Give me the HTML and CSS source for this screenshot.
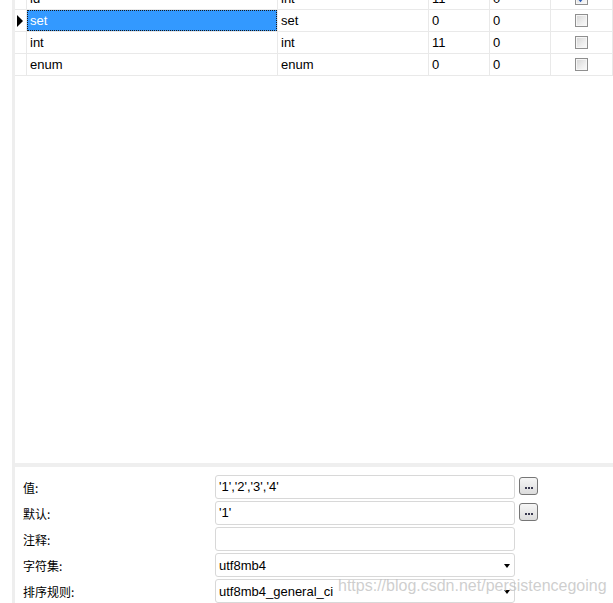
FILE: index.html
```html
<!DOCTYPE html>
<html>
<head>
<meta charset="utf-8">
<link rel="stylesheet" href="styles.css">
</head>
<body>
<div class="app">
  <div class="main">
    <div class="grid-area">
      <div class="grid">
        <div class="row">
          <div class="cell ind"></div>
          <div class="cell c1">id</div>
          <div class="cell c2">int</div>
          <div class="cell c3">11</div>
          <div class="cell c4">0</div>
          <div class="cell c5"><span class="chk checked"><svg width="9" height="9" viewBox="0 0 9 9"><path d="M1.5 4.5 L3.5 6.8 L7.5 1.8" fill="none" stroke="#2a5cb8" stroke-width="1.8"/></svg></span></div>
        </div>
        <div class="row">
          <div class="cell ind"><span class="arrow"></span></div>
          <div class="cell c1 sel"><span class="focus">set</span></div>
          <div class="cell c2">set</div>
          <div class="cell c3">0</div>
          <div class="cell c4">0</div>
          <div class="cell c5"><span class="chk"></span></div>
        </div>
        <div class="row">
          <div class="cell ind"></div>
          <div class="cell c1">int</div>
          <div class="cell c2">int</div>
          <div class="cell c3">11</div>
          <div class="cell c4">0</div>
          <div class="cell c5"><span class="chk"></span></div>
        </div>
        <div class="row">
          <div class="cell ind"></div>
          <div class="cell c1">enum</div>
          <div class="cell c2">enum</div>
          <div class="cell c3">0</div>
          <div class="cell c4">0</div>
          <div class="cell c5"><span class="chk"></span></div>
        </div>
      </div>
    </div>
    <div class="divider"></div>
    <div class="form">
      <div class="label">值:</div>
      <div class="field">'1','2','3','4'</div>
      <div class="btn"><span class="dots"><i></i><i></i><i></i></span></div>

      <div class="label">默认:</div>
      <div class="field">'1'</div>
      <div class="btn"><span class="dots"><i></i><i></i><i></i></span></div>

      <div class="label">注释:</div>
      <div class="field"></div>
      <div></div>

      <div class="label">字符集:</div>
      <div class="field select">utf8mb4<span class="caret"></span></div>
      <div></div>

      <div class="label">排序规则:</div>
      <div class="field select">utf8mb4_general_ci<span class="caret"></span></div>
      <div></div>
    </div>
  </div>
  <div class="watermark">https://blog.csdn.net/persistencegoing</div>
</div>
</body>
</html>
```
FILE: styles.css
```css
html, body {
  margin: 0;
  padding: 0;
  background: #ffffff;
}
body {
  font-family: "Liberation Sans", Arial, "Noto Sans CJK SC", sans-serif;
  font-size: 13px;
  color: #000;
  overflow: hidden;
}
.app {
  position: relative;
  width: 613px;
  height: 603px;
  overflow: hidden;
}
.main {
  margin-left: 12px;
  border-left: 3px solid #eeeeee;
  height: 603px;
  display: flex;
  flex-direction: column;
}
.grid-area {
  height: 463px;
  overflow: hidden;
  flex: none;
}
.grid {
  margin-top: -12px;
}
.row {
  display: flex;
  height: 22px;
  box-sizing: border-box;
  border-bottom: 1px solid #e9e9e9;
}
.cell {
  box-sizing: border-box;
  border-right: 1px solid #e9e9e9;
  height: 21px;
  line-height: 21px;
  padding-left: 3px;
  white-space: nowrap;
  overflow: hidden;
}
.ind { width: 12px; padding: 0; display: flex; align-items: center; padding-left: 2px; }
.c1 { width: 251px; }
.c2 { width: 151px; }
.c3 { width: 61px; }
.c4 { width: 61px; }
.c5 { width: 62px; display: flex; align-items: center; justify-content: center; padding: 0; }
.arrow {
  width: 0;
  height: 0;
  border-left: 6px solid #000;
  border-top: 6px solid transparent;
  border-bottom: 6px solid transparent;
}
.sel {
  background: #3399ff;
  color: #fff;
  padding: 0;
}
.focus {
  display: block;
  height: 21px;
  box-sizing: border-box;
  border: 1px dotted #1a1a1a;
  line-height: 19px;
  padding-left: 2px;
}
.chk {
  display: flex;
  align-items: center;
  justify-content: center;
  width: 13px;
  height: 13px;
  box-sizing: border-box;
  border: 1px solid #8f8f8f;
  background: linear-gradient(135deg, #d4d4d4 0%, #eeeeee 60%, #fbfbfb 100%);
  box-shadow: inset 0 0 0 1px #f6f6f6;
}
.chk svg { display: block; }
.divider {
  height: 4px;
  background: #efefef;
  flex: none;
}
.form {
  display: grid;
  grid-template-columns: 195px 300px 19px;
  column-gap: 5px;
  row-gap: 2px;
  grid-auto-rows: 24px;
  padding-top: 8px;
}
.label {
  font-family: "Noto Sans CJK SC", sans-serif;
  font-size: 12px;
  padding-left: 8px;
  display: flex;
  align-items: center;
}
.field {
  box-sizing: border-box;
  height: 24px;
  border: 1px solid #d8d8d8;
  border-radius: 3px;
  padding-left: 3px;
  line-height: 22px;
  font-family: "Liberation Sans", Arial, sans-serif;
  font-size: 13px;
  white-space: nowrap;
}
.select {
  display: flex;
  align-items: center;
  justify-content: space-between;
  padding-right: 4px;
  line-height: normal;
}
.caret {
  width: 0;
  height: 0;
  border-top: 4px solid #000;
  border-left: 3.5px solid transparent;
  border-right: 3.5px solid transparent;
  margin-top: 2px;
}
.btn {
  box-sizing: border-box;
  width: 19px;
  height: 18px;
  margin-top: 2px;
  margin-left: -1px;
  border: 1px solid #767676;
  border-radius: 3px;
  background: linear-gradient(#f6f6f6, #dcdcdc);
  display: flex;
  align-items: flex-end;
  justify-content: center;
  padding-bottom: 5px;
}
.dots {
  display: flex;
  gap: 1px;
}
.dots i {
  display: block;
  width: 2px;
  height: 2px;
  background: #3a3a50;
}
.watermark {
  position: absolute;
  left: 338px;
  top: 577px;
  font-family: "Liberation Sans", Arial, sans-serif;
  font-size: 16px;
  color: rgba(190, 190, 190, 0.75);
  white-space: nowrap;
}
```
